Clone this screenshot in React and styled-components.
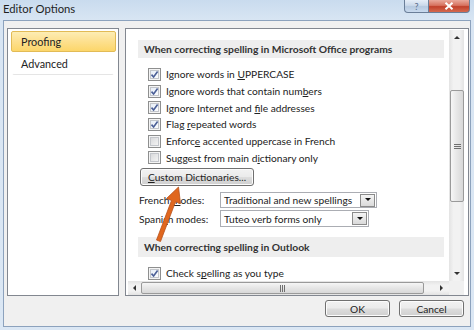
import React from "react";
import styled, { createGlobalStyle } from "styled-components";

const FONT = `Lato, "Open Sans", "Noto Sans", sans-serif`;

const Global = createGlobalStyle`
  html, body { margin: 0; padding: 0; }
  body {
    width: 474px; height: 330px; overflow: hidden;
    font-family: ${FONT};
    background: #cfdff1;
  }
`;

const Window = styled.div`
  position: relative;
  width: 474px;
  height: 330px;
  display: flex;
  flex-direction: column;
  background: linear-gradient(180deg, #c9dbee 0px, #d8e5f3 20px, #dbe7f4 100%);
  box-sizing: border-box;
`;

const TitleBar = styled.div`
  height: 20px;
  display: flex;
  align-items: flex-start;
  flex-shrink: 0;
`;

const Title = styled.div`
  font-family: ${FONT};
  font-size: 11.3px;
  color: #1e1e1e;
  padding: 1px 0 0 3px;
  line-height: 16px;
  flex: 1;
`;

const CaptionButtons = styled.div`
  display: flex;
  margin-right: 4px;
`;

const CapBtn = styled.div`
  height: 13px;
  box-sizing: border-box;
  display: flex;
  align-items: center;
  justify-content: center;
  border: 1px solid #6a7e98;
  border-top: none;
  width: ${(p) => p.$w}px;
  background: ${(p) =>
    p.$close
      ? "linear-gradient(180deg, #e9a99c 0%, #d7725f 45%, #c1402b 55%, #d56a4f 100%)"
      : "linear-gradient(180deg, #e6eef8 0%, #cbd9ea 45%, #b6c9e0 55%, #c9daee 100%)"};
  border-radius: ${(p) => (p.$close ? "0 0 4px 0" : "0 0 0 4px")};
  border-left: ${(p) => (p.$close ? "none" : "1px solid #6a7e98")};
`;

const HelpGlyph = styled.span`
  font-size: 9px;
  color: #5a6f8c;
  font-family: ${FONT};
  line-height: 1;
`;

const Body = styled.div`
  flex: 1;
  margin: 0 3px 3px 3px;
  background: #f0f0f0;
  border: 1px solid #8ca2bd;
  display: flex;
  flex-direction: column;
  padding: 7px 1px 0 3px;
  box-sizing: border-box;
`;

const Panels = styled.div`
  display: flex;
  gap: 6px;
  height: 268px;
  flex-shrink: 0;
`;

const NavList = styled.div`
  width: 112px;
  box-sizing: border-box;
  background: #fff;
  border: 1px solid #828790;
  padding: 2px 2px 0 3px;
  display: flex;
  flex-direction: column;
`;

const NavItem = styled.div`
  font-family: ${FONT};
  font-size: 10.8px;
  color: #222;
  height: ${(p) => (p.$active ? 21 : 23)}px;
  box-sizing: border-box;
  display: flex;
  align-items: center;
  padding-left: 9px;
  border-radius: 2px;
  ${(p) =>
    p.$active
      ? `background: linear-gradient(180deg, #fdedb4 0%, #fde192 45%, #fcd66a 100%);
         border: 1px solid #e2bb56;`
      : `border: 1px solid transparent; border-bottom: 1px solid #e5e5e5; margin: 0 2px 0 1px; padding-left: 8px;`}
`;

const OptionsPane = styled.div`
  flex: 1;
  box-sizing: border-box;
  background: #fff;
  border: 1px solid #828790;
  padding: 1px 4px 0 2px;
  display: grid;
  grid-template-columns: 1fr 15px;
  grid-template-rows: 251px 14px;
`;

const Content = styled.div`
  overflow: hidden;
  padding: 10px 5px 0 10px;
  font-family: ${FONT};
  font-size: 10.2px;
  color: #222;
`;

const SectionHeader = styled.div`
  background: #eeeeee;
  height: ${(p) => p.$h || 18}px;
  display: flex;
  align-items: center;
  padding-left: 6px;
  font-weight: 700;
  font-size: 10.3px;
  color: #333;
  margin-top: ${(p) => p.$mt || 0}px;
  white-space: nowrap;
`;

const Rows = styled.div`
  margin: 8px 0 0 10px;
`;

const CheckRow = styled.div`
  height: 16.7px;
  display: flex;
  align-items: center;
  gap: 5px;
  white-space: nowrap;
`;

const Box = styled.span`
  width: 13px;
  height: 13px;
  box-sizing: border-box;
  border: 1px solid #8e8f8f;
  background: #f4f4f4;
  display: inline-flex;
  align-items: center;
  justify-content: center;
  flex-shrink: 0;
  position: relative;
  &::after {
    content: "";
    position: absolute;
    inset: 1px;
    border: 1px solid #c3c6cb;
    background: ${(p) => (p.$checked ? "linear-gradient(135deg,#e7eef8,#fbfcfe)" : "linear-gradient(135deg,#d9dadc,#f3f3f3)")};
  }
  svg { position: relative; z-index: 1; }
`;

const Acc = styled.u`
  text-decoration: underline;
  text-underline-offset: 1px;
`;

const PushButton = styled.div`
  font-family: ${FONT};
  font-size: 10.2px;
  color: #1e1e1e;
  width: ${(p) => p.$w}px;
  height: ${(p) => p.$h || 18}px;
  box-sizing: border-box;
  border: 1px solid #707070;
  border-radius: 3px;
  background: linear-gradient(180deg, #f2f2f2 0%, #ebebeb 48%, #dddddd 52%, #cfcfcf 100%);
  box-shadow: inset 0 0 0 1px #fcfcfc;
  display: flex;
  align-items: center;
  justify-content: center;
  white-space: nowrap;
`;

const DictButton = styled(PushButton)`
  margin: 2px 0 0 2px;
`;

const ModeRow = styled.div`
  display: flex;
  align-items: center;
  height: ${(p) => p.$h}px;
  margin-top: ${(p) => p.$mt}px;
  white-space: nowrap;
`;

const ModeLabel = styled.span`
  width: 81px;
  flex-shrink: 0;
  margin-left: 1px;
`;

const Select = styled.div`
  height: 100%;
  box-sizing: border-box;
  border: 1px solid #abadb3;
  display: flex;
  align-items: center;
  padding: 0 1px 0 3px;
  white-space: nowrap;
  width: ${(p) => p.$w}px;
  flex-shrink: 0;
  justify-content: space-between;
`;

const DropBtn = styled.span`
  width: 15px;
  height: 13px;
  box-sizing: border-box;
  border: 1px solid #8b8b8b;
  background: linear-gradient(180deg, #f4f4f4, #dadada);
  display: inline-flex;
  align-items: center;
  justify-content: center;
  flex-shrink: 0;
  margin-left: 2px;
`;

const VScroll = styled.div`
  background: linear-gradient(90deg, #e3e3e3, #f2f2f2 30%, #f2f2f2 70%, #e3e3e3);
  display: flex;
  flex-direction: column;
  align-items: stretch;
`;

const HScroll = styled.div`
  background: linear-gradient(180deg, #e3e3e3, #f2f2f2 30%, #f2f2f2 70%, #e3e3e3);
  display: flex;
  align-items: stretch;
`;

const Corner = styled.div`
  background: #f0f0f0;
`;

const ArrowCell = styled.div`
  flex: 0 0 ${(p) => p.$s}px;
  display: flex;
  align-items: center;
  justify-content: center;
`;

const Thumb = styled.div`
  box-sizing: border-box;
  border: 1px solid #9a9a9a;
  border-radius: 2px;
  display: flex;
  align-items: center;
  justify-content: center;
  ${(p) =>
    p.$vertical
      ? `height: 112px; margin: 0 0 0 1px; background: linear-gradient(90deg, #f6f6f6, #e6e6e6 50%, #d8d8d8);`
      : `width: 283px; margin: 1px 0; background: linear-gradient(180deg, #f6f6f6, #e6e6e6 50%, #d8d8d8);`}
`;

const TrackGap = styled.div`
  flex: 0 0 ${(p) => p.$s}px;
`;

const TrackFill = styled.div`
  flex: 1;
`;

const ButtonRow = styled.div`
  display: flex;
  justify-content: flex-end;
  gap: 9px;
  margin-top: 4px;
  padding-right: 5px;
`;

const ArrowOverlay = styled.svg`
  position: absolute;
  left: 0;
  top: 0;
  pointer-events: none;
`;

const Check = ({ checked }) => (
  <Box $checked={checked}>
    {checked && (
      <svg width="9" height="9" viewBox="0 0 9 9">
        <path d="M1.5 4.6 L3.6 7 L7.6 1.5" fill="none" stroke="#4b5f97" strokeWidth="1.6" />
      </svg>
    )}
  </Box>
);

const Tri = ({ dir, size = 5, color = "#333" }) => {
  const paths = {
    up: "M0 4 L3 1 L6 4 Z",
    down: "M0 1 L6 1 L3 4 Z",
    left: "M4 0 L1 3 L4 6 Z",
    right: "M1 0 L4 3 L1 6 Z",
  };
  return (
    <svg width={size + 1} height={size + 1} viewBox="0 0 6 6">
      <path d={paths[dir]} fill={color} />
    </svg>
  );
};

const Grip = ({ vertical }) =>
  vertical ? (
    <svg width="7" height="7" viewBox="0 0 7 7">
      <path d="M0 1.5h7M0 3.5h7M0 5.5h7" stroke="#6f6f6f" strokeWidth="1" />
    </svg>
  ) : (
    <svg width="7" height="7" viewBox="0 0 7 7">
      <path d="M1.5 0v7M3.5 0v7M5.5 0v7" stroke="#6f6f6f" strokeWidth="1" />
    </svg>
  );

const checks = [
  { checked: true, label: <>Ignore words in <Acc>U</Acc>PPERCASE</> },
  { checked: true, label: <>Ignore words that contain num<Acc>b</Acc>ers</> },
  { checked: true, label: <>Ignore Internet and <Acc>f</Acc>ile addresses</> },
  { checked: true, label: <>Flag <Acc>r</Acc>epeated words</> },
  { checked: false, label: <>Enforc<Acc>e</Acc> accented uppercase in French</> },
  { checked: false, label: <>Suggest from main d<Acc>i</Acc>ctionary only</> },
];

export default function App() {
  return (
    <>
      <Global />
      <Window>
        <TitleBar>
          <Title>Editor Options</Title>
          <CaptionButtons>
            <CapBtn $w={25}>
              <HelpGlyph>?</HelpGlyph>
            </CapBtn>
            <CapBtn $w={41} $close>
              <svg width="10" height="8" viewBox="0 0 10 8">
                <path d="M1.5 0.8 L8.5 7.2 M8.5 0.8 L1.5 7.2" stroke="#fff" strokeWidth="2" />
              </svg>
            </CapBtn>
          </CaptionButtons>
        </TitleBar>
        <Body>
          <Panels>
            <NavList>
              <NavItem $active>Proofing</NavItem>
              <NavItem>Advanced</NavItem>
            </NavList>
            <OptionsPane>
              <Content>
                <SectionHeader>When correcting spelling in Microsoft Office programs</SectionHeader>
                <Rows>
                  {checks.map((c, i) => (
                    <CheckRow key={i}>
                      <Check checked={c.checked} />
                      <span>{c.label}</span>
                    </CheckRow>
                  ))}
                </Rows>
                <DictButton $w={114}>
                  <span><Acc>C</Acc>ustom Dictionaries...</span>
                </DictButton>
                <ModeRow $h={16} $mt={6}>
                  <ModeLabel>French <Acc>m</Acc>odes:</ModeLabel>
                  <Select $w={157}>
                    <span>Traditional and new spellings</span>
                    <DropBtn><Tri dir="down" size={5} color="#111" /></DropBtn>
                  </Select>
                </ModeRow>
                <ModeRow $h={17} $mt={2}>
                  <ModeLabel>Spani<Acc>s</Acc>h modes:</ModeLabel>
                  <Select $w={149}>
                    <span>Tuteo verb forms only</span>
                    <DropBtn><Tri dir="down" size={5} color="#111" /></DropBtn>
                  </Select>
                </ModeRow>
                <SectionHeader $h={20} $mt={10}>When correcting spelling in Outlook</SectionHeader>
                <Rows>
                  <CheckRow>
                    <Check checked />
                    <span>Check s<Acc>p</Acc>elling as you type</span>
                  </CheckRow>
                </Rows>
              </Content>
              <VScroll>
                <ArrowCell $s={15}><Tri dir="up" /></ArrowCell>
                <TrackGap $s={45} />
                <Thumb $vertical><Grip vertical /></Thumb>
                <TrackFill />
                <ArrowCell $s={15}><Tri dir="down" /></ArrowCell>
              </VScroll>
              <HScroll>
                <ArrowCell $s={13}><Tri dir="left" /></ArrowCell>
                <Thumb><Grip /></Thumb>
                <TrackFill />
                <ArrowCell $s={15}><Tri dir="right" /></ArrowCell>
              </HScroll>
              <Corner />
            </OptionsPane>
          </Panels>
          <ButtonRow>
            <PushButton $w={65} $h={17}>OK</PushButton>
            <PushButton $w={65} $h={17}>Cancel</PushButton>
          </ButtonRow>
        </Body>
        <ArrowOverlay width="474" height="330" viewBox="0 0 474 330">
          <path
            d="M156.5 240 L171.5 200.5 L166.5 198.5 L178.5 187 L180.5 203.5 L175.5 201.8 L160.5 241.5 Z"
            fill="#e0671f"
            stroke="#b6511a"
            strokeWidth="0.8"
            strokeLinejoin="round"
          />
        </ArrowOverlay>
      </Window>
    </>
  );
}
